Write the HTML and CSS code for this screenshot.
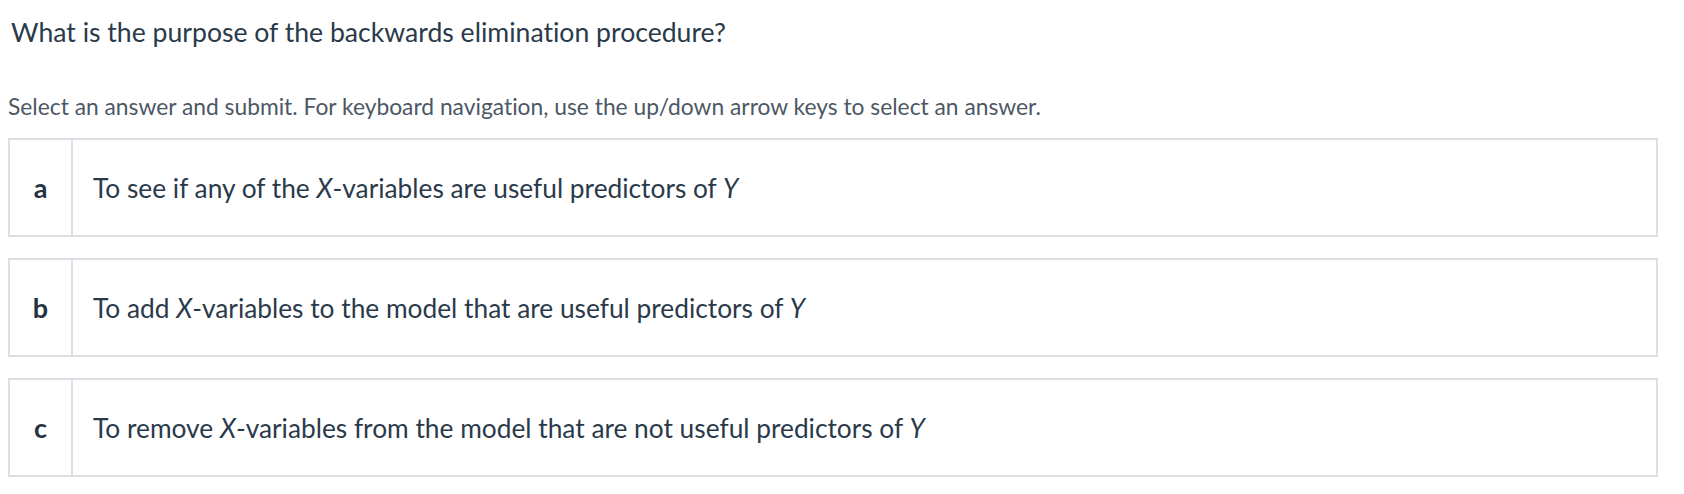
FILE: index.html
```html
<!DOCTYPE html>
<html lang="en">
<head>
<meta charset="utf-8">
<title>Quiz question</title>
<link rel="stylesheet" href="styles.css">
</head>
<body>
<main class="question">
  <h1 class="prompt">What is the purpose of the backwards elimination procedure?</h1>
  <p class="instructions">Select an answer and submit. For keyboard navigation, use the up/down arrow keys to select an answer.</p>
  <div class="options" role="radiogroup">
    <div class="option" role="radio" aria-checked="false">
      <div class="option-label">a</div>
      <div class="option-text">To see if any of the <i>X</i>-variables are useful predictors of <i>Y</i></div>
    </div>
    <div class="option" role="radio" aria-checked="false">
      <div class="option-label">b</div>
      <div class="option-text">To add <i>X</i>-variables to the model that are useful predictors of <i>Y</i></div>
    </div>
    <div class="option" role="radio" aria-checked="false">
      <div class="option-label">c</div>
      <div class="option-text">To remove <i>X</i>-variables from the model that are not useful predictors of <i>Y</i></div>
    </div>
  </div>
</main>
</body>
</html>
```
FILE: styles.css
```css
html, body {
  margin: 0;
  padding: 0;
  background: #ffffff;
}

body {
  font-family: Lato, "Open Sans", "Liberation Sans", sans-serif;
  font-variant-ligatures: none;
  color: #2a3a4a;
}

.question {
  width: 1650px;
  padding: 0 0 0 8px;
}

.prompt {
  margin: 0;
  padding: 16px 0 0 3px;
  font-size: 26.6px;
  font-weight: 400;
  line-height: 32px;
}

.instructions {
  margin: 0;
  padding-top: 44px;
  font-size: 22.8px;
  line-height: 28px;
  color: #4c5865;
}

.options {
  display: flex;
  flex-direction: column;
  gap: 21px;
  margin-top: 18px;
}

.option {
  display: flex;
  height: 95px;
  border: 2px solid #dcdfe3;
}

.option-label {
  width: 61px;
  flex: none;
  display: flex;
  align-items: center;
  justify-content: center;
  border-right: 2px solid #dcdfe3;
  font-size: 27px;
  font-weight: 700;
  color: #26323f;
}

.option-text {
  display: flex;
  align-items: center;
  padding-left: 20px;
  font-size: 26.3px;
  white-space: pre;
}

.option-text i {
  font-style: italic;
}
```
